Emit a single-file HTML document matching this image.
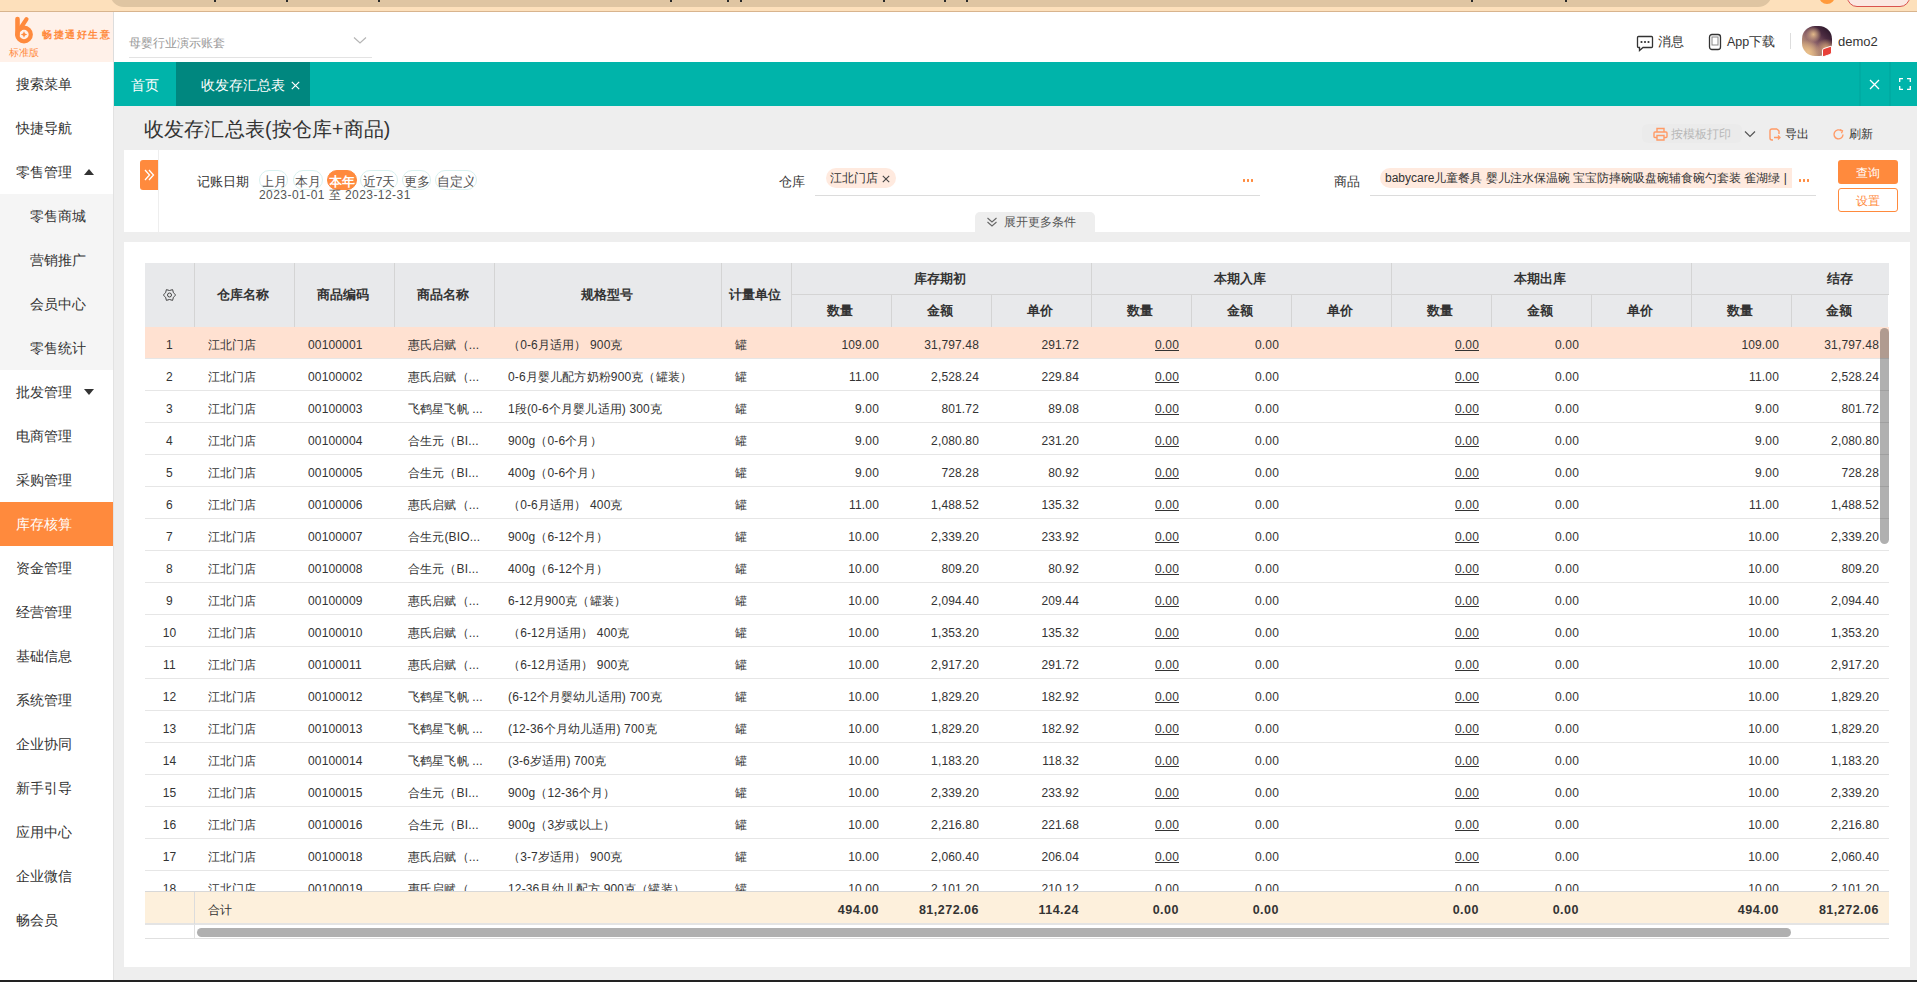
<!DOCTYPE html>
<html><head><meta charset="utf-8">
<style>
*{box-sizing:border-box;margin:0;padding:0}
html,body{width:1917px;height:982px;overflow:hidden;background:#eeeeee;font-family:"Liberation Sans",sans-serif;color:#333;font-size:12px}
.abs{position:absolute}
#topstrip{position:absolute;left:0;top:0;width:1917px;height:12px;background:#fde0bb;border-bottom:1px solid #d8b48e}
#toptab{position:absolute;left:110px;top:-10px;width:1662px;height:17px;background:#dfc5a2;border-radius:0 0 14px 14px}
#header{position:absolute;left:0;top:12px;width:1917px;height:50px;background:#fff}
#logo{position:absolute;left:0;top:12px;width:114px;height:50px;background:#fff1e9;border-right:1px solid #dddddd}
#sidebar{position:absolute;left:0;top:62px;width:114px;height:920px;background:#fff;border-right:1px solid #e2e2e2}
.si{position:absolute;left:0;width:113px;height:44px;line-height:44px;padding-left:16px;font-size:14px;color:#333}
.si.sub{background:#f5f5f5;padding-left:30px}
.si.act{background:#ff8a3d;color:#fff}
.tri{position:absolute;left:84px;top:19px;width:0;height:0;border-left:5px solid transparent;border-right:5px solid transparent}
.tri.up{border-bottom:6px solid #333}
.tri.down{border-top:6px solid #333}
#tabbar{position:absolute;left:114px;top:62px;width:1803px;height:44px;background:#00b4aa}
.tab{position:absolute;top:0;height:44px;line-height:46px;color:#fff;font-size:14px}
#content{position:absolute;left:114px;top:106px;width:1803px;height:875px;background:#eeeeee}
#title{position:absolute;left:144px;top:116px;font-size:19.5px;letter-spacing:0.15px;color:#333;line-height:26px}
#filter{position:absolute;left:124px;top:150px;width:1786px;height:82px;background:#fff}
#tpanel{position:absolute;left:124px;top:242px;width:1786px;height:725px;background:#fff}
#table{position:absolute;left:145px;top:263px;width:1744px;height:676px;overflow:hidden}
.th{position:absolute;background:#e8e9eb;color:#333;font-weight:bold;font-size:12.5px;text-align:center;border-left:1px solid #d4d4d4;padding-right:3px}
.th.first{border-left:none;padding-right:0}
.th.tall{top:0;height:64px;line-height:64px}
.th.grp{top:0;height:32px;line-height:32px;border-bottom:1px solid #d4d4d4}
.th.sub{top:32px;height:32px;line-height:32px}
.th svg{vertical-align:middle}
.row{position:absolute;left:0;width:1744px;height:32px;background:#fff;border-bottom:1px solid #e6e6e6}
.row.sel{background:#ffe1d1}
.td{position:absolute;top:3px;height:28px;line-height:31px;white-space:nowrap;overflow:hidden;font-size:12px;color:#333;letter-spacing:0.15px}
.td.l{padding-left:14px}
.td.c{text-align:center}
.td.r,.td.ru{text-align:right;padding-right:12px}
.td u{text-decoration:underline}
#foot{position:absolute;left:0;top:628px;width:1744px;height:34px;background:#fdf0dc;border-top:1px solid #d8d8d8;border-bottom:2px solid #e4e4e4}
#foot .td{top:3px}
#foot .td.b{font-weight:bold;font-size:12.5px;letter-spacing:0.5px}
#foot .vd{position:absolute;left:49px;top:0;width:1px;height:32px;background:#dcdcdc}
#hscroll{position:absolute;left:52px;top:665px;width:1594px;height:9px;border-radius:5px;background:#b0b0b0}
#taskbar{position:absolute;left:0;top:980px;width:1917px;height:2px;background:#222}
.hdr{top:22px;font-size:12.5px;line-height:16px;color:#333}
.flab{top:24px;font-size:12.5px;line-height:16px;color:#333}
.pill{position:absolute;top:20px;height:20px;border:1px solid #d8f0ef;border-radius:10px;font-size:12.5px;line-height:22px;text-align:center;color:#555;overflow:hidden;white-space:nowrap}
.pill.on{background:#ff8a3d;border-color:#ff8a3d;color:#fff;font-weight:bold}
.dots{top:29px;width:11px;height:3px;background:radial-gradient(circle,#ff8a3d 1.1px,transparent 1.3px) 0 0/4px 3px repeat-x}
</style></head><body>
<div id="content"></div>
<div id="topstrip"><div id="toptab"></div><div class="abs" style="left:214px;top:0;width:2px;height:2px;background:#2a2a2a"></div><div class="abs" style="left:286px;top:0;width:2px;height:2px;background:#2a2a2a"></div><div class="abs" style="left:378px;top:0;width:2px;height:2px;background:#2a2a2a"></div><div class="abs" style="left:670px;top:0;width:2px;height:2px;background:#2a2a2a"></div><div class="abs" style="left:727px;top:0;width:2px;height:2px;background:#2a2a2a"></div><div class="abs" style="left:740px;top:0;width:2px;height:2px;background:#2a2a2a"></div><div class="abs" style="left:883px;top:0;width:2px;height:2px;background:#2a2a2a"></div><div class="abs" style="left:944px;top:0;width:2px;height:2px;background:#2a2a2a"></div><div class="abs" style="left:966px;top:0;width:2px;height:2px;background:#2a2a2a"></div><div class="abs" style="left:1471px;top:0;width:2px;height:2px;background:#2a2a2a"></div><div class="abs" style="left:1565px;top:0;width:2px;height:2px;background:#2a2a2a"></div><div class="abs" style="left:1819px;top:-12px;width:16px;height:16px;border-radius:8px;background:#ff9a3c"></div><div class="abs" style="left:1847px;top:-14px;width:63px;height:21px;border-radius:10px;background:#fbe8e2;border:1px solid #d9534f"></div></div>
<div id="header">
  <div class="abs" style="left:129px;top:23px;font-size:12px;color:#999;line-height:16px">母婴行业演示账套</div>
  <svg class="abs" style="left:353px;top:24px" width="14" height="9" viewBox="0 0 14 9"><path d="M1 1.5 L7 7 L13 1.5" fill="none" stroke="#b5b5b5" stroke-width="1.2"/></svg>
  <div class="abs" style="left:129px;top:45px;width:243px;height:1px;background:#e3e3e3"></div>
  <svg class="abs" style="left:1636px;top:23px" width="18" height="17" viewBox="0 0 18 17"><path d="M2.5 1.5 H15.5 Q16.5 1.5 16.5 2.5 V11.5 Q16.5 12.5 15.5 12.5 H7 L3.5 15.5 V12.5 H2.5 Q1.5 12.5 1.5 11.5 V2.5 Q1.5 1.5 2.5 1.5 Z" fill="none" stroke="#333" stroke-width="1.3"/><circle cx="5.5" cy="7" r="1.1" fill="#333"/><circle cx="9" cy="7" r="1.1" fill="#333"/><circle cx="12.5" cy="7" r="1.1" fill="#333"/></svg>
  <div class="abs hdr" style="left:1658px">消息</div>
  <svg class="abs" style="left:1708px;top:21px" width="14" height="18" viewBox="0 0 14 18"><rect x="1.5" y="1.5" width="11" height="15" rx="2.5" fill="none" stroke="#333" stroke-width="1.3"/><rect x="4" y="4" width="6" height="8" fill="none" stroke="#888" stroke-width="1"/></svg>
  <div class="abs hdr" style="left:1727px">App下载</div>
  <div class="abs" style="left:1790px;top:21px;width:1px;height:16px;background:#ddd"></div>
  <div class="abs" style="left:1802px;top:14px;width:30px;height:30px;border-radius:13px;overflow:hidden;background:radial-gradient(circle at 38% 28%,#e2b88a 0%,rgba(226,184,138,0) 28%),radial-gradient(circle at 20% 88%,#eac08a 0%,rgba(234,192,138,0) 35%),radial-gradient(circle at 80% 75%,#d8a878 0%,rgba(216,168,120,0) 30%),linear-gradient(225deg,#1e1020 0%,#4a2a40 30%,#8a6068 55%,#c09878 80%,#d8b088 100%)"></div>
  <div class="abs" style="left:1822px;top:35px;width:10px;height:9px;background:#e84038;border:1px solid #fff;border-radius:2px;transform:skewY(-20deg)"></div>
  <div class="abs" style="left:1838px;top:22px;font-size:13px;line-height:16px;color:#333">demo2</div>
</div>
<div id="logo">
  <svg class="abs" style="left:14px;top:4px" width="21" height="28" viewBox="0 0 21 28">
    <path d="M3.5 3 V19" stroke="#ff8a3d" stroke-width="4.6" stroke-linecap="round" fill="none"/>
    <path d="M12.5 3.2 L6 13" stroke="#ff8a3d" stroke-width="4.2" stroke-linecap="round" fill="none"/>
    <circle cx="10" cy="18.5" r="6.8" fill="none" stroke="#ff8a3d" stroke-width="4.2"/>
    <path d="M10 15.3 L11 17.5 L13.2 18.5 L11 19.5 L10 21.7 L9 19.5 L6.8 18.5 L9 17.5 Z" fill="#ff8a3d"/>
  </svg>
  <div class="abs" style="left:42px;top:16px;font-size:9.5px;line-height:14px;color:#ff8a3d;font-weight:bold;letter-spacing:1.55px;white-space:nowrap">畅捷通好生意</div>
  <div class="abs" style="left:9px;top:34px;font-size:10px;line-height:14px;color:#ff8a3d">标准版</div>
</div>
<div id="sidebar">
<div class="si" style="top:0px">搜索菜单</div>
<div class="si" style="top:44px">快捷导航</div>
<div class="si" style="top:88px">零售管理<span class="tri up"></span></div>
<div class="si sub" style="top:132px">零售商城</div>
<div class="si sub" style="top:176px">营销推广</div>
<div class="si sub" style="top:220px">会员中心</div>
<div class="si sub" style="top:264px">零售统计</div>
<div class="si" style="top:308px">批发管理<span class="tri down"></span></div>
<div class="si" style="top:352px">电商管理</div>
<div class="si" style="top:396px">采购管理</div>
<div class="si act" style="top:440px">库存核算</div>
<div class="si" style="top:484px">资金管理</div>
<div class="si" style="top:528px">经营管理</div>
<div class="si" style="top:572px">基础信息</div>
<div class="si" style="top:616px">系统管理</div>
<div class="si" style="top:660px">企业协同</div>
<div class="si" style="top:704px">新手引导</div>
<div class="si" style="top:748px">应用中心</div>
<div class="si" style="top:792px">企业微信</div>
<div class="si" style="top:836px">畅会员</div>
</div>
<div id="tabbar">
  <div class="tab" style="left:0;width:62px;text-align:center;">首页</div>
  <div class="tab" style="left:62px;width:134px;background:#00877f;padding-left:25px">收发存汇总表 <svg style="position:absolute;left:115px;top:19px" width="9" height="9" viewBox="0 0 9 9"><path d="M0.8 0.8 L8.2 8.2 M8.2 0.8 L0.8 8.2" stroke="#fff" stroke-width="1.2"/></svg></div>
  <div class="abs" style="left:1745px;top:0;width:58px;height:44px;background:#00b4aa"></div>
  <div class="abs" style="left:1745px;top:0;width:2px;height:44px;background:rgba(0,0,0,0.04)"></div>
  <div class="abs" style="left:1775px;top:0;width:2px;height:44px;background:rgba(0,0,0,0.04)"></div>
  <svg class="abs" style="left:1755px;top:17px" width="11" height="11" viewBox="0 0 11 11"><path d="M1 1 L10 10 M10 1 L1 10" stroke="#fff" stroke-width="1.3"/></svg>
  <svg class="abs" style="left:1785px;top:16px" width="12" height="12" viewBox="0 0 12 12"><path d="M0.7 4 V0.7 H4 M8 0.7 H11.3 V4 M11.3 8 V11.3 H8 M4 11.3 H0.7 V8" fill="none" stroke="#fff" stroke-width="1.3"/></svg>
</div>
<div id="title">收发存汇总表(按仓库+商品)</div>
<div class="abs" style="left:1642px;top:124px;width:100px;height:19px;border-radius:6px;background:#ebebeb"></div>
<svg class="abs" style="left:1653px;top:127px" width="15" height="14" viewBox="0 0 15 14"><path d="M4 5 V1.5 H11 V5 M4 10.5 H2 Q1 10.5 1 9.5 V6 Q1 5 2 5 H13 Q14 5 14 6 V9.5 Q14 10.5 13 10.5 H11 M4 8.5 H11 V13 H4 Z" fill="none" stroke="#ff9a66" stroke-width="1.4"/></svg>
<div class="abs" style="left:1671px;top:126px;font-size:12px;line-height:16px;color:#b8b8b8">按模板打印</div>
<svg class="abs" style="left:1744px;top:130px" width="12" height="8" viewBox="0 0 12 8"><path d="M1 1.5 L6 6.5 L11 1.5" fill="none" stroke="#555" stroke-width="1.2"/></svg>
<svg class="abs" style="left:1768px;top:127px" width="13" height="15" viewBox="0 0 13 15"><path d="M9 2 H4 Q2 2 2 4 V11 Q2 13 4 13 H5 M9 2 L11 4 V7" fill="none" stroke="#ff9a66" stroke-width="1.4"/><path d="M6 10.5 H12 M10 8.5 L12 10.5 L10 12.5" fill="none" stroke="#ff9a66" stroke-width="1.3"/></svg>
<div class="abs" style="left:1785px;top:126px;font-size:12px;line-height:16px;color:#333">导出</div>
<svg class="abs" style="left:1832px;top:128px" width="13" height="13" viewBox="0 0 13 13"><path d="M11 6.5 A4.5 4.5 0 1 1 9.5 3" fill="none" stroke="#ff9a66" stroke-width="1.4"/><path d="M8 1.5 L10.5 2.8 L9.5 5.3" fill="none" stroke="#ff9a66" stroke-width="1.3"/></svg>
<div class="abs" style="left:1849px;top:126px;font-size:12px;line-height:16px;color:#333">刷新</div>
<div id="filter">
  <div class="abs" style="left:34px;top:0;width:1px;height:82px;background:#eeeeee"></div>
  <div class="abs" style="left:16px;top:10px;width:18px;height:30px;background:#ff8a3d;border-radius:3px 0 0 3px"></div>
  <svg class="abs" style="left:18px;top:18px" width="14" height="14" viewBox="0 0 14 14"><path d="M3 2 L7.5 7 L3 12 M7 2 L11.5 7 L7 12" fill="none" stroke="#fff" stroke-width="1.3"/></svg>
  <div class="abs flab" style="left:73px">记账日期</div>
  <div class="pill" style="left:135px;width:29px">上月</div>
  <div class="pill" style="left:169px;width:30px">本月</div>
  <div class="pill on" style="left:203px;width:30px">本年</div>
  <div class="pill" style="left:236px;width:38px">近7天</div>
  <div class="pill" style="left:278px;width:29px">更多</div>
  <div class="pill" style="left:311px;width:42px">自定义</div>
  <div class="abs" style="left:135px;top:38px;font-size:12px;line-height:14px;color:#555;letter-spacing:0.45px;white-space:nowrap">2023-01-01 至 2023-12-31</div>
  <div class="abs flab" style="left:655px">仓库</div>
  <div class="abs" style="left:691px;top:45px;width:445px;height:1px;background:#dcdcdc"></div>
  <div class="abs" style="left:702px;top:18px;width:70px;height:20px;border-radius:10px;background:#ffeadf;font-size:12px;line-height:20px;padding-left:4px;color:#333">江北门店<svg style="position:absolute;left:56px;top:7px" width="8" height="8" viewBox="0 0 8 8"><path d="M0.8 0.8 L7.2 7.2 M7.2 0.8 L0.8 7.2" stroke="#444" stroke-width="1.1"/></svg></div>
  <div class="abs dots" style="left:1118px"></div>
  <div class="abs flab" style="left:1210px">商品</div>
  <div class="abs" style="left:1246px;top:45px;width:446px;height:1px;background:#dcdcdc"></div>
  <div class="abs" style="left:1256px;top:18px;width:412px;height:20px;border-radius:10px 0 0 10px;background:#ffeadf;font-size:12px;line-height:20px;padding-left:5px;color:#333;white-space:nowrap;overflow:hidden">babycare儿童餐具 婴儿注水保温碗 宝宝防摔碗吸盘碗辅食碗勺套装 雀湖绿 |</div>
  <div class="abs dots" style="left:1674px"></div>
  <div class="abs" style="left:1714px;top:10px;width:60px;height:24px;border-radius:3px;background:#ff8a3d;color:#fff;font-size:12px;line-height:26px;text-align:center">查询</div>
  <div class="abs" style="left:1714px;top:38px;width:60px;height:24px;border-radius:3px;border:1px solid #ff8a3d;background:#fff;color:#ff8a3d;font-size:12px;line-height:24px;text-align:center">设置</div>
  <div class="abs" style="left:851px;top:62px;width:120px;height:20px;border-radius:5px 5px 0 0;background:#eeeeee;font-size:12px;line-height:20px;color:#555;padding-left:29px">展开更多条件</div>
  <svg class="abs" style="left:862px;top:66px" width="12" height="12" viewBox="0 0 12 12"><path d="M1.5 2 L6 6 L10.5 2 M1.5 6 L6 10 L10.5 6" fill="none" stroke="#666" stroke-width="1.1"/></svg>
</div>
<div id="tpanel"></div>
<div id="table">
<div class="th tall first" style="left:0px;width:49px"><svg style="position:relative;top:-1px;left:0px" width="15" height="14" viewBox="0 0 15 14"><path d="M13.70 7.00 L11.40 9.25 L10.60 12.37 L7.50 11.50 L4.40 12.37 L3.60 9.25 L1.30 7.00 L3.60 4.75 L4.40 1.63 L7.50 2.50 L10.60 1.63 L11.40 4.75 Z" fill="none" stroke="#444" stroke-width="1" stroke-linejoin="round"/><circle cx="7.5" cy="7" r="2" fill="none" stroke="#444" stroke-width="1"/></svg></div>
<div class="th tall" style="left:49px;width:100px">仓库名称</div>
<div class="th tall" style="left:149px;width:100px">商品编码</div>
<div class="th tall" style="left:249px;width:100px">商品名称</div>
<div class="th tall" style="left:349px;width:227px">规格型号</div>
<div class="th tall" style="left:576px;width:70px">计量单位</div>
<div class="th grp" style="left:646px;width:300px">库存期初</div>
<div class="th grp" style="left:946px;width:300px">本期入库</div>
<div class="th grp" style="left:1246px;width:300px">本期出库</div>
<div class="th grp style2" style="left:1546px;width:300px">结存</div>
<div class="th sub" style="left:646px;width:100px">数量</div>
<div class="th sub" style="left:746px;width:100px">金额</div>
<div class="th sub" style="left:846px;width:100px">单价</div>
<div class="th sub" style="left:946px;width:100px">数量</div>
<div class="th sub" style="left:1046px;width:100px">金额</div>
<div class="th sub" style="left:1146px;width:100px">单价</div>
<div class="th sub" style="left:1246px;width:100px">数量</div>
<div class="th sub" style="left:1346px;width:100px">金额</div>
<div class="th sub" style="left:1446px;width:100px">单价</div>
<div class="th sub" style="left:1546px;width:100px">数量</div>
<div class="th sub" style="left:1646px;width:97px">金额</div>
<div style="position:absolute;left:0;top:64px;width:1744px;height:564px;overflow:hidden">
<div class="row sel" style="top:0px"><div class="td c" style="left:0px;width:49px">1</div><div class="td l" style="left:49px;width:100px">江北门店</div><div class="td l" style="left:149px;width:100px">00100001</div><div class="td l" style="left:249px;width:100px">惠氏启赋（...</div><div class="td l" style="left:349px;width:227px">（0-6月适用） 900克</div><div class="td l" style="left:576px;width:70px">罐</div><div class="td r" style="left:646px;width:100px">109.00</div><div class="td r" style="left:746px;width:100px">31,797.48</div><div class="td r" style="left:846px;width:100px">291.72</div><div class="td ru" style="left:946px;width:100px"><u>0.00</u></div><div class="td r" style="left:1046px;width:100px">0.00</div><div class="td r" style="left:1146px;width:100px"></div><div class="td ru" style="left:1246px;width:100px"><u>0.00</u></div><div class="td r" style="left:1346px;width:100px">0.00</div><div class="td r" style="left:1446px;width:100px"></div><div class="td r" style="left:1546px;width:100px">109.00</div><div class="td r" style="left:1646px;width:100px">31,797.48</div></div>
<div class="row" style="top:32px"><div class="td c" style="left:0px;width:49px">2</div><div class="td l" style="left:49px;width:100px">江北门店</div><div class="td l" style="left:149px;width:100px">00100002</div><div class="td l" style="left:249px;width:100px">惠氏启赋（...</div><div class="td l" style="left:349px;width:227px">0-6月婴儿配方奶粉900克（罐装）</div><div class="td l" style="left:576px;width:70px">罐</div><div class="td r" style="left:646px;width:100px">11.00</div><div class="td r" style="left:746px;width:100px">2,528.24</div><div class="td r" style="left:846px;width:100px">229.84</div><div class="td ru" style="left:946px;width:100px"><u>0.00</u></div><div class="td r" style="left:1046px;width:100px">0.00</div><div class="td r" style="left:1146px;width:100px"></div><div class="td ru" style="left:1246px;width:100px"><u>0.00</u></div><div class="td r" style="left:1346px;width:100px">0.00</div><div class="td r" style="left:1446px;width:100px"></div><div class="td r" style="left:1546px;width:100px">11.00</div><div class="td r" style="left:1646px;width:100px">2,528.24</div></div>
<div class="row" style="top:64px"><div class="td c" style="left:0px;width:49px">3</div><div class="td l" style="left:49px;width:100px">江北门店</div><div class="td l" style="left:149px;width:100px">00100003</div><div class="td l" style="left:249px;width:100px">飞鹤星飞帆 ...</div><div class="td l" style="left:349px;width:227px">1段(0-6个月婴儿适用) 300克</div><div class="td l" style="left:576px;width:70px">罐</div><div class="td r" style="left:646px;width:100px">9.00</div><div class="td r" style="left:746px;width:100px">801.72</div><div class="td r" style="left:846px;width:100px">89.08</div><div class="td ru" style="left:946px;width:100px"><u>0.00</u></div><div class="td r" style="left:1046px;width:100px">0.00</div><div class="td r" style="left:1146px;width:100px"></div><div class="td ru" style="left:1246px;width:100px"><u>0.00</u></div><div class="td r" style="left:1346px;width:100px">0.00</div><div class="td r" style="left:1446px;width:100px"></div><div class="td r" style="left:1546px;width:100px">9.00</div><div class="td r" style="left:1646px;width:100px">801.72</div></div>
<div class="row" style="top:96px"><div class="td c" style="left:0px;width:49px">4</div><div class="td l" style="left:49px;width:100px">江北门店</div><div class="td l" style="left:149px;width:100px">00100004</div><div class="td l" style="left:249px;width:100px">合生元（BI...</div><div class="td l" style="left:349px;width:227px">900g（0-6个月）</div><div class="td l" style="left:576px;width:70px">罐</div><div class="td r" style="left:646px;width:100px">9.00</div><div class="td r" style="left:746px;width:100px">2,080.80</div><div class="td r" style="left:846px;width:100px">231.20</div><div class="td ru" style="left:946px;width:100px"><u>0.00</u></div><div class="td r" style="left:1046px;width:100px">0.00</div><div class="td r" style="left:1146px;width:100px"></div><div class="td ru" style="left:1246px;width:100px"><u>0.00</u></div><div class="td r" style="left:1346px;width:100px">0.00</div><div class="td r" style="left:1446px;width:100px"></div><div class="td r" style="left:1546px;width:100px">9.00</div><div class="td r" style="left:1646px;width:100px">2,080.80</div></div>
<div class="row" style="top:128px"><div class="td c" style="left:0px;width:49px">5</div><div class="td l" style="left:49px;width:100px">江北门店</div><div class="td l" style="left:149px;width:100px">00100005</div><div class="td l" style="left:249px;width:100px">合生元（BI...</div><div class="td l" style="left:349px;width:227px">400g（0-6个月）</div><div class="td l" style="left:576px;width:70px">罐</div><div class="td r" style="left:646px;width:100px">9.00</div><div class="td r" style="left:746px;width:100px">728.28</div><div class="td r" style="left:846px;width:100px">80.92</div><div class="td ru" style="left:946px;width:100px"><u>0.00</u></div><div class="td r" style="left:1046px;width:100px">0.00</div><div class="td r" style="left:1146px;width:100px"></div><div class="td ru" style="left:1246px;width:100px"><u>0.00</u></div><div class="td r" style="left:1346px;width:100px">0.00</div><div class="td r" style="left:1446px;width:100px"></div><div class="td r" style="left:1546px;width:100px">9.00</div><div class="td r" style="left:1646px;width:100px">728.28</div></div>
<div class="row" style="top:160px"><div class="td c" style="left:0px;width:49px">6</div><div class="td l" style="left:49px;width:100px">江北门店</div><div class="td l" style="left:149px;width:100px">00100006</div><div class="td l" style="left:249px;width:100px">惠氏启赋（...</div><div class="td l" style="left:349px;width:227px">（0-6月适用） 400克</div><div class="td l" style="left:576px;width:70px">罐</div><div class="td r" style="left:646px;width:100px">11.00</div><div class="td r" style="left:746px;width:100px">1,488.52</div><div class="td r" style="left:846px;width:100px">135.32</div><div class="td ru" style="left:946px;width:100px"><u>0.00</u></div><div class="td r" style="left:1046px;width:100px">0.00</div><div class="td r" style="left:1146px;width:100px"></div><div class="td ru" style="left:1246px;width:100px"><u>0.00</u></div><div class="td r" style="left:1346px;width:100px">0.00</div><div class="td r" style="left:1446px;width:100px"></div><div class="td r" style="left:1546px;width:100px">11.00</div><div class="td r" style="left:1646px;width:100px">1,488.52</div></div>
<div class="row" style="top:192px"><div class="td c" style="left:0px;width:49px">7</div><div class="td l" style="left:49px;width:100px">江北门店</div><div class="td l" style="left:149px;width:100px">00100007</div><div class="td l" style="left:249px;width:100px">合生元(BIO...</div><div class="td l" style="left:349px;width:227px">900g（6-12个月）</div><div class="td l" style="left:576px;width:70px">罐</div><div class="td r" style="left:646px;width:100px">10.00</div><div class="td r" style="left:746px;width:100px">2,339.20</div><div class="td r" style="left:846px;width:100px">233.92</div><div class="td ru" style="left:946px;width:100px"><u>0.00</u></div><div class="td r" style="left:1046px;width:100px">0.00</div><div class="td r" style="left:1146px;width:100px"></div><div class="td ru" style="left:1246px;width:100px"><u>0.00</u></div><div class="td r" style="left:1346px;width:100px">0.00</div><div class="td r" style="left:1446px;width:100px"></div><div class="td r" style="left:1546px;width:100px">10.00</div><div class="td r" style="left:1646px;width:100px">2,339.20</div></div>
<div class="row" style="top:224px"><div class="td c" style="left:0px;width:49px">8</div><div class="td l" style="left:49px;width:100px">江北门店</div><div class="td l" style="left:149px;width:100px">00100008</div><div class="td l" style="left:249px;width:100px">合生元（BI...</div><div class="td l" style="left:349px;width:227px">400g（6-12个月）</div><div class="td l" style="left:576px;width:70px">罐</div><div class="td r" style="left:646px;width:100px">10.00</div><div class="td r" style="left:746px;width:100px">809.20</div><div class="td r" style="left:846px;width:100px">80.92</div><div class="td ru" style="left:946px;width:100px"><u>0.00</u></div><div class="td r" style="left:1046px;width:100px">0.00</div><div class="td r" style="left:1146px;width:100px"></div><div class="td ru" style="left:1246px;width:100px"><u>0.00</u></div><div class="td r" style="left:1346px;width:100px">0.00</div><div class="td r" style="left:1446px;width:100px"></div><div class="td r" style="left:1546px;width:100px">10.00</div><div class="td r" style="left:1646px;width:100px">809.20</div></div>
<div class="row" style="top:256px"><div class="td c" style="left:0px;width:49px">9</div><div class="td l" style="left:49px;width:100px">江北门店</div><div class="td l" style="left:149px;width:100px">00100009</div><div class="td l" style="left:249px;width:100px">惠氏启赋（...</div><div class="td l" style="left:349px;width:227px">6-12月900克（罐装）</div><div class="td l" style="left:576px;width:70px">罐</div><div class="td r" style="left:646px;width:100px">10.00</div><div class="td r" style="left:746px;width:100px">2,094.40</div><div class="td r" style="left:846px;width:100px">209.44</div><div class="td ru" style="left:946px;width:100px"><u>0.00</u></div><div class="td r" style="left:1046px;width:100px">0.00</div><div class="td r" style="left:1146px;width:100px"></div><div class="td ru" style="left:1246px;width:100px"><u>0.00</u></div><div class="td r" style="left:1346px;width:100px">0.00</div><div class="td r" style="left:1446px;width:100px"></div><div class="td r" style="left:1546px;width:100px">10.00</div><div class="td r" style="left:1646px;width:100px">2,094.40</div></div>
<div class="row" style="top:288px"><div class="td c" style="left:0px;width:49px">10</div><div class="td l" style="left:49px;width:100px">江北门店</div><div class="td l" style="left:149px;width:100px">00100010</div><div class="td l" style="left:249px;width:100px">惠氏启赋（...</div><div class="td l" style="left:349px;width:227px">（6-12月适用） 400克</div><div class="td l" style="left:576px;width:70px">罐</div><div class="td r" style="left:646px;width:100px">10.00</div><div class="td r" style="left:746px;width:100px">1,353.20</div><div class="td r" style="left:846px;width:100px">135.32</div><div class="td ru" style="left:946px;width:100px"><u>0.00</u></div><div class="td r" style="left:1046px;width:100px">0.00</div><div class="td r" style="left:1146px;width:100px"></div><div class="td ru" style="left:1246px;width:100px"><u>0.00</u></div><div class="td r" style="left:1346px;width:100px">0.00</div><div class="td r" style="left:1446px;width:100px"></div><div class="td r" style="left:1546px;width:100px">10.00</div><div class="td r" style="left:1646px;width:100px">1,353.20</div></div>
<div class="row" style="top:320px"><div class="td c" style="left:0px;width:49px">11</div><div class="td l" style="left:49px;width:100px">江北门店</div><div class="td l" style="left:149px;width:100px">00100011</div><div class="td l" style="left:249px;width:100px">惠氏启赋（...</div><div class="td l" style="left:349px;width:227px">（6-12月适用） 900克</div><div class="td l" style="left:576px;width:70px">罐</div><div class="td r" style="left:646px;width:100px">10.00</div><div class="td r" style="left:746px;width:100px">2,917.20</div><div class="td r" style="left:846px;width:100px">291.72</div><div class="td ru" style="left:946px;width:100px"><u>0.00</u></div><div class="td r" style="left:1046px;width:100px">0.00</div><div class="td r" style="left:1146px;width:100px"></div><div class="td ru" style="left:1246px;width:100px"><u>0.00</u></div><div class="td r" style="left:1346px;width:100px">0.00</div><div class="td r" style="left:1446px;width:100px"></div><div class="td r" style="left:1546px;width:100px">10.00</div><div class="td r" style="left:1646px;width:100px">2,917.20</div></div>
<div class="row" style="top:352px"><div class="td c" style="left:0px;width:49px">12</div><div class="td l" style="left:49px;width:100px">江北门店</div><div class="td l" style="left:149px;width:100px">00100012</div><div class="td l" style="left:249px;width:100px">飞鹤星飞帆 ...</div><div class="td l" style="left:349px;width:227px">(6-12个月婴幼儿适用) 700克</div><div class="td l" style="left:576px;width:70px">罐</div><div class="td r" style="left:646px;width:100px">10.00</div><div class="td r" style="left:746px;width:100px">1,829.20</div><div class="td r" style="left:846px;width:100px">182.92</div><div class="td ru" style="left:946px;width:100px"><u>0.00</u></div><div class="td r" style="left:1046px;width:100px">0.00</div><div class="td r" style="left:1146px;width:100px"></div><div class="td ru" style="left:1246px;width:100px"><u>0.00</u></div><div class="td r" style="left:1346px;width:100px">0.00</div><div class="td r" style="left:1446px;width:100px"></div><div class="td r" style="left:1546px;width:100px">10.00</div><div class="td r" style="left:1646px;width:100px">1,829.20</div></div>
<div class="row" style="top:384px"><div class="td c" style="left:0px;width:49px">13</div><div class="td l" style="left:49px;width:100px">江北门店</div><div class="td l" style="left:149px;width:100px">00100013</div><div class="td l" style="left:249px;width:100px">飞鹤星飞帆 ...</div><div class="td l" style="left:349px;width:227px">(12-36个月幼儿适用) 700克</div><div class="td l" style="left:576px;width:70px">罐</div><div class="td r" style="left:646px;width:100px">10.00</div><div class="td r" style="left:746px;width:100px">1,829.20</div><div class="td r" style="left:846px;width:100px">182.92</div><div class="td ru" style="left:946px;width:100px"><u>0.00</u></div><div class="td r" style="left:1046px;width:100px">0.00</div><div class="td r" style="left:1146px;width:100px"></div><div class="td ru" style="left:1246px;width:100px"><u>0.00</u></div><div class="td r" style="left:1346px;width:100px">0.00</div><div class="td r" style="left:1446px;width:100px"></div><div class="td r" style="left:1546px;width:100px">10.00</div><div class="td r" style="left:1646px;width:100px">1,829.20</div></div>
<div class="row" style="top:416px"><div class="td c" style="left:0px;width:49px">14</div><div class="td l" style="left:49px;width:100px">江北门店</div><div class="td l" style="left:149px;width:100px">00100014</div><div class="td l" style="left:249px;width:100px">飞鹤星飞帆 ...</div><div class="td l" style="left:349px;width:227px">(3-6岁适用) 700克</div><div class="td l" style="left:576px;width:70px">罐</div><div class="td r" style="left:646px;width:100px">10.00</div><div class="td r" style="left:746px;width:100px">1,183.20</div><div class="td r" style="left:846px;width:100px">118.32</div><div class="td ru" style="left:946px;width:100px"><u>0.00</u></div><div class="td r" style="left:1046px;width:100px">0.00</div><div class="td r" style="left:1146px;width:100px"></div><div class="td ru" style="left:1246px;width:100px"><u>0.00</u></div><div class="td r" style="left:1346px;width:100px">0.00</div><div class="td r" style="left:1446px;width:100px"></div><div class="td r" style="left:1546px;width:100px">10.00</div><div class="td r" style="left:1646px;width:100px">1,183.20</div></div>
<div class="row" style="top:448px"><div class="td c" style="left:0px;width:49px">15</div><div class="td l" style="left:49px;width:100px">江北门店</div><div class="td l" style="left:149px;width:100px">00100015</div><div class="td l" style="left:249px;width:100px">合生元（BI...</div><div class="td l" style="left:349px;width:227px">900g（12-36个月）</div><div class="td l" style="left:576px;width:70px">罐</div><div class="td r" style="left:646px;width:100px">10.00</div><div class="td r" style="left:746px;width:100px">2,339.20</div><div class="td r" style="left:846px;width:100px">233.92</div><div class="td ru" style="left:946px;width:100px"><u>0.00</u></div><div class="td r" style="left:1046px;width:100px">0.00</div><div class="td r" style="left:1146px;width:100px"></div><div class="td ru" style="left:1246px;width:100px"><u>0.00</u></div><div class="td r" style="left:1346px;width:100px">0.00</div><div class="td r" style="left:1446px;width:100px"></div><div class="td r" style="left:1546px;width:100px">10.00</div><div class="td r" style="left:1646px;width:100px">2,339.20</div></div>
<div class="row" style="top:480px"><div class="td c" style="left:0px;width:49px">16</div><div class="td l" style="left:49px;width:100px">江北门店</div><div class="td l" style="left:149px;width:100px">00100016</div><div class="td l" style="left:249px;width:100px">合生元（BI...</div><div class="td l" style="left:349px;width:227px">900g（3岁或以上）</div><div class="td l" style="left:576px;width:70px">罐</div><div class="td r" style="left:646px;width:100px">10.00</div><div class="td r" style="left:746px;width:100px">2,216.80</div><div class="td r" style="left:846px;width:100px">221.68</div><div class="td ru" style="left:946px;width:100px"><u>0.00</u></div><div class="td r" style="left:1046px;width:100px">0.00</div><div class="td r" style="left:1146px;width:100px"></div><div class="td ru" style="left:1246px;width:100px"><u>0.00</u></div><div class="td r" style="left:1346px;width:100px">0.00</div><div class="td r" style="left:1446px;width:100px"></div><div class="td r" style="left:1546px;width:100px">10.00</div><div class="td r" style="left:1646px;width:100px">2,216.80</div></div>
<div class="row" style="top:512px"><div class="td c" style="left:0px;width:49px">17</div><div class="td l" style="left:49px;width:100px">江北门店</div><div class="td l" style="left:149px;width:100px">00100018</div><div class="td l" style="left:249px;width:100px">惠氏启赋（...</div><div class="td l" style="left:349px;width:227px">（3-7岁适用） 900克</div><div class="td l" style="left:576px;width:70px">罐</div><div class="td r" style="left:646px;width:100px">10.00</div><div class="td r" style="left:746px;width:100px">2,060.40</div><div class="td r" style="left:846px;width:100px">206.04</div><div class="td ru" style="left:946px;width:100px"><u>0.00</u></div><div class="td r" style="left:1046px;width:100px">0.00</div><div class="td r" style="left:1146px;width:100px"></div><div class="td ru" style="left:1246px;width:100px"><u>0.00</u></div><div class="td r" style="left:1346px;width:100px">0.00</div><div class="td r" style="left:1446px;width:100px"></div><div class="td r" style="left:1546px;width:100px">10.00</div><div class="td r" style="left:1646px;width:100px">2,060.40</div></div>
<div class="row" style="top:544px"><div class="td c" style="left:0px;width:49px">18</div><div class="td l" style="left:49px;width:100px">江北门店</div><div class="td l" style="left:149px;width:100px">00100019</div><div class="td l" style="left:249px;width:100px">惠氏启赋（...</div><div class="td l" style="left:349px;width:227px">12-36月幼儿配方 900克（罐装）</div><div class="td l" style="left:576px;width:70px">罐</div><div class="td r" style="left:646px;width:100px">10.00</div><div class="td r" style="left:746px;width:100px">2,101.20</div><div class="td r" style="left:846px;width:100px">210.12</div><div class="td ru" style="left:946px;width:100px"><u>0.00</u></div><div class="td r" style="left:1046px;width:100px">0.00</div><div class="td r" style="left:1146px;width:100px"></div><div class="td ru" style="left:1246px;width:100px"><u>0.00</u></div><div class="td r" style="left:1346px;width:100px">0.00</div><div class="td r" style="left:1446px;width:100px"></div><div class="td r" style="left:1546px;width:100px">10.00</div><div class="td r" style="left:1646px;width:100px">2,101.20</div></div>
</div>
<div id="foot"><div class="vd"></div><div class="td r b" style="left:0px;width:49px"></div><div class="td l" style="left:49px;width:100px">合计</div><div class="td r b" style="left:149px;width:100px"></div><div class="td r b" style="left:249px;width:100px"></div><div class="td r b" style="left:349px;width:227px"></div><div class="td r b" style="left:576px;width:70px"></div><div class="td r b" style="left:646px;width:100px">494.00</div><div class="td r b" style="left:746px;width:100px">81,272.06</div><div class="td r b" style="left:846px;width:100px">114.24</div><div class="td r b" style="left:946px;width:100px">0.00</div><div class="td r b" style="left:1046px;width:100px">0.00</div><div class="td r b" style="left:1146px;width:100px"></div><div class="td r b" style="left:1246px;width:100px">0.00</div><div class="td r b" style="left:1346px;width:100px">0.00</div><div class="td r b" style="left:1446px;width:100px"></div><div class="td r b" style="left:1546px;width:100px">494.00</div><div class="td r b" style="left:1646px;width:100px">81,272.06</div></div>
<div id="hscroll"></div>
<div class="abs" style="left:1735px;top:65px;width:9px;height:216px;border-radius:4.5px;background:rgba(0,0,0,0.31)"></div>
<div class="abs" style="left:49px;top:662px;width:1px;height:13px;background:#e0e0e0"></div>
<div class="abs" style="left:0;top:675px;width:1744px;height:1px;background:#e0e0e0"></div>
</div>
<div id="taskbar"></div>
</body></html>
